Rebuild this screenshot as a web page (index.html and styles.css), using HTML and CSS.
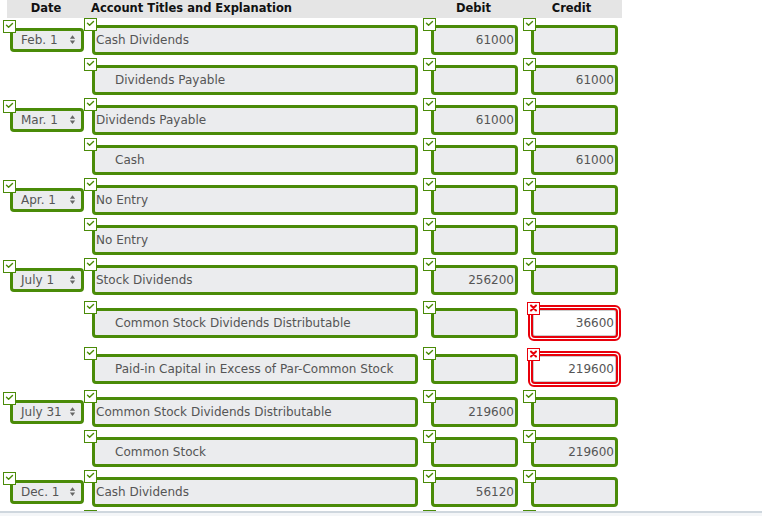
FILE: index.html
```html
<!DOCTYPE html>
<html>
<head>
<meta charset="utf-8">
<link rel="stylesheet" href="styles.css">
</head>
<body>
<div class="header">
  <div class="h-date">Date</div>
  <div class="h-acct">Account Titles and Explanation</div>
  <div class="h-num">Debit</div>
  <div class="h-num h-credit">Credit</div>
</div>

<div class="rows">
  <!-- Feb 1 -->
  <div class="row">
    <div class="c-date"><div class="cell"><span class="chk ok"><svg viewBox="0 0 11 11"><path d="M2.5 4.2 L4.6 6.2 L8.5 2.4"/></svg></span><div class="sel">Feb. 1<svg class="arr" viewBox="0 0 8 12"><path d="M4 1 L7 5 L1 5Z M4 11 L7 7 L1 7Z"/></svg></div></div></div>
    <div class="c-acct"><div class="cell"><span class="chk ok"><svg viewBox="0 0 11 11"><path d="M2.5 4.2 L4.6 6.2 L8.5 2.4"/></svg></span><div class="field">Cash Dividends</div></div></div>
    <div class="c-num"><div class="cell"><span class="chk ok"><svg viewBox="0 0 11 11"><path d="M2.5 4.2 L4.6 6.2 L8.5 2.4"/></svg></span><div class="field num">61000</div></div></div>
    <div class="c-num"><div class="cell"><span class="chk ok"><svg viewBox="0 0 11 11"><path d="M2.5 4.2 L4.6 6.2 L8.5 2.4"/></svg></span><div class="field num"></div></div></div>
  </div>
  <div class="row">
    <div class="c-date"></div>
    <div class="c-acct"><div class="cell"><span class="chk ok"><svg viewBox="0 0 11 11"><path d="M2.5 4.2 L4.6 6.2 L8.5 2.4"/></svg></span><div class="field ind">Dividends Payable</div></div></div>
    <div class="c-num"><div class="cell"><span class="chk ok"><svg viewBox="0 0 11 11"><path d="M2.5 4.2 L4.6 6.2 L8.5 2.4"/></svg></span><div class="field num"></div></div></div>
    <div class="c-num"><div class="cell"><span class="chk ok"><svg viewBox="0 0 11 11"><path d="M2.5 4.2 L4.6 6.2 L8.5 2.4"/></svg></span><div class="field num">61000</div></div></div>
  </div>

  <!-- Mar 1 -->
  <div class="row">
    <div class="c-date"><div class="cell"><span class="chk ok"><svg viewBox="0 0 11 11"><path d="M2.5 4.2 L4.6 6.2 L8.5 2.4"/></svg></span><div class="sel">Mar. 1<svg class="arr" viewBox="0 0 8 12"><path d="M4 1 L7 5 L1 5Z M4 11 L7 7 L1 7Z"/></svg></div></div></div>
    <div class="c-acct"><div class="cell"><span class="chk ok"><svg viewBox="0 0 11 11"><path d="M2.5 4.2 L4.6 6.2 L8.5 2.4"/></svg></span><div class="field">Dividends Payable</div></div></div>
    <div class="c-num"><div class="cell"><span class="chk ok"><svg viewBox="0 0 11 11"><path d="M2.5 4.2 L4.6 6.2 L8.5 2.4"/></svg></span><div class="field num">61000</div></div></div>
    <div class="c-num"><div class="cell"><span class="chk ok"><svg viewBox="0 0 11 11"><path d="M2.5 4.2 L4.6 6.2 L8.5 2.4"/></svg></span><div class="field num"></div></div></div>
  </div>
  <div class="row">
    <div class="c-date"></div>
    <div class="c-acct"><div class="cell"><span class="chk ok"><svg viewBox="0 0 11 11"><path d="M2.5 4.2 L4.6 6.2 L8.5 2.4"/></svg></span><div class="field ind">Cash</div></div></div>
    <div class="c-num"><div class="cell"><span class="chk ok"><svg viewBox="0 0 11 11"><path d="M2.5 4.2 L4.6 6.2 L8.5 2.4"/></svg></span><div class="field num"></div></div></div>
    <div class="c-num"><div class="cell"><span class="chk ok"><svg viewBox="0 0 11 11"><path d="M2.5 4.2 L4.6 6.2 L8.5 2.4"/></svg></span><div class="field num">61000</div></div></div>
  </div>

  <!-- Apr 1 -->
  <div class="row">
    <div class="c-date"><div class="cell"><span class="chk ok"><svg viewBox="0 0 11 11"><path d="M2.5 4.2 L4.6 6.2 L8.5 2.4"/></svg></span><div class="sel">Apr. 1<svg class="arr" viewBox="0 0 8 12"><path d="M4 1 L7 5 L1 5Z M4 11 L7 7 L1 7Z"/></svg></div></div></div>
    <div class="c-acct"><div class="cell"><span class="chk ok"><svg viewBox="0 0 11 11"><path d="M2.5 4.2 L4.6 6.2 L8.5 2.4"/></svg></span><div class="field">No Entry</div></div></div>
    <div class="c-num"><div class="cell"><span class="chk ok"><svg viewBox="0 0 11 11"><path d="M2.5 4.2 L4.6 6.2 L8.5 2.4"/></svg></span><div class="field num"></div></div></div>
    <div class="c-num"><div class="cell"><span class="chk ok"><svg viewBox="0 0 11 11"><path d="M2.5 4.2 L4.6 6.2 L8.5 2.4"/></svg></span><div class="field num"></div></div></div>
  </div>
  <div class="row">
    <div class="c-date"></div>
    <div class="c-acct"><div class="cell"><span class="chk ok"><svg viewBox="0 0 11 11"><path d="M2.5 4.2 L4.6 6.2 L8.5 2.4"/></svg></span><div class="field">No Entry</div></div></div>
    <div class="c-num"><div class="cell"><span class="chk ok"><svg viewBox="0 0 11 11"><path d="M2.5 4.2 L4.6 6.2 L8.5 2.4"/></svg></span><div class="field num"></div></div></div>
    <div class="c-num"><div class="cell"><span class="chk ok"><svg viewBox="0 0 11 11"><path d="M2.5 4.2 L4.6 6.2 L8.5 2.4"/></svg></span><div class="field num"></div></div></div>
  </div>

  <!-- July 1 -->
  <div class="row">
    <div class="c-date"><div class="cell"><span class="chk ok"><svg viewBox="0 0 11 11"><path d="M2.5 4.2 L4.6 6.2 L8.5 2.4"/></svg></span><div class="sel">July 1<svg class="arr" viewBox="0 0 8 12"><path d="M4 1 L7 5 L1 5Z M4 11 L7 7 L1 7Z"/></svg></div></div></div>
    <div class="c-acct"><div class="cell"><span class="chk ok"><svg viewBox="0 0 11 11"><path d="M2.5 4.2 L4.6 6.2 L8.5 2.4"/></svg></span><div class="field">Stock Dividends</div></div></div>
    <div class="c-num"><div class="cell"><span class="chk ok"><svg viewBox="0 0 11 11"><path d="M2.5 4.2 L4.6 6.2 L8.5 2.4"/></svg></span><div class="field num">256200</div></div></div>
    <div class="c-num"><div class="cell"><span class="chk ok"><svg viewBox="0 0 11 11"><path d="M2.5 4.2 L4.6 6.2 L8.5 2.4"/></svg></span><div class="field num"></div></div></div>
  </div>
  <div class="row tall">
    <div class="c-date"></div>
    <div class="c-acct"><div class="cell"><span class="chk ok"><svg viewBox="0 0 11 11"><path d="M2.5 4.2 L4.6 6.2 L8.5 2.4"/></svg></span><div class="field ind">Common Stock Dividends Distributable</div></div></div>
    <div class="c-num"><div class="cell"><span class="chk ok"><svg viewBox="0 0 11 11"><path d="M2.5 4.2 L4.6 6.2 L8.5 2.4"/></svg></span><div class="field num"></div></div></div>
    <div class="c-num"><div class="cell bad"><span class="chk err"><svg viewBox="0 0 11 11"><path d="M3 2.5 L8 7.5 M8 2.5 L3 7.5"/></svg></span><div class="wrong"><div class="wrong-in">36600</div></div></div></div>
  </div>
  <div class="row tall">
    <div class="c-date"></div>
    <div class="c-acct"><div class="cell"><span class="chk ok"><svg viewBox="0 0 11 11"><path d="M2.5 4.2 L4.6 6.2 L8.5 2.4"/></svg></span><div class="field ind">Paid-in Capital in Excess of Par-Common Stock</div></div></div>
    <div class="c-num"><div class="cell"><span class="chk ok"><svg viewBox="0 0 11 11"><path d="M2.5 4.2 L4.6 6.2 L8.5 2.4"/></svg></span><div class="field num"></div></div></div>
    <div class="c-num"><div class="cell bad"><span class="chk err"><svg viewBox="0 0 11 11"><path d="M3 2.5 L8 7.5 M8 2.5 L3 7.5"/></svg></span><div class="wrong"><div class="wrong-in">219600</div></div></div></div>
  </div>

  <!-- July 31 -->
  <div class="row">
    <div class="c-date"><div class="cell"><span class="chk ok"><svg viewBox="0 0 11 11"><path d="M2.5 4.2 L4.6 6.2 L8.5 2.4"/></svg></span><div class="sel">July 31<svg class="arr" viewBox="0 0 8 12"><path d="M4 1 L7 5 L1 5Z M4 11 L7 7 L1 7Z"/></svg></div></div></div>
    <div class="c-acct"><div class="cell"><span class="chk ok"><svg viewBox="0 0 11 11"><path d="M2.5 4.2 L4.6 6.2 L8.5 2.4"/></svg></span><div class="field">Common Stock Dividends Distributable</div></div></div>
    <div class="c-num"><div class="cell"><span class="chk ok"><svg viewBox="0 0 11 11"><path d="M2.5 4.2 L4.6 6.2 L8.5 2.4"/></svg></span><div class="field num">219600</div></div></div>
    <div class="c-num"><div class="cell"><span class="chk ok"><svg viewBox="0 0 11 11"><path d="M2.5 4.2 L4.6 6.2 L8.5 2.4"/></svg></span><div class="field num"></div></div></div>
  </div>
  <div class="row">
    <div class="c-date"></div>
    <div class="c-acct"><div class="cell"><span class="chk ok"><svg viewBox="0 0 11 11"><path d="M2.5 4.2 L4.6 6.2 L8.5 2.4"/></svg></span><div class="field ind">Common Stock</div></div></div>
    <div class="c-num"><div class="cell"><span class="chk ok"><svg viewBox="0 0 11 11"><path d="M2.5 4.2 L4.6 6.2 L8.5 2.4"/></svg></span><div class="field num"></div></div></div>
    <div class="c-num"><div class="cell"><span class="chk ok"><svg viewBox="0 0 11 11"><path d="M2.5 4.2 L4.6 6.2 L8.5 2.4"/></svg></span><div class="field num">219600</div></div></div>
  </div>

  <!-- Dec 1 -->
  <div class="row">
    <div class="c-date"><div class="cell"><span class="chk ok"><svg viewBox="0 0 11 11"><path d="M2.5 4.2 L4.6 6.2 L8.5 2.4"/></svg></span><div class="sel">Dec. 1<svg class="arr" viewBox="0 0 8 12"><path d="M4 1 L7 5 L1 5Z M4 11 L7 7 L1 7Z"/></svg></div></div></div>
    <div class="c-acct"><div class="cell"><span class="chk ok"><svg viewBox="0 0 11 11"><path d="M2.5 4.2 L4.6 6.2 L8.5 2.4"/></svg></span><div class="field">Cash Dividends</div></div></div>
    <div class="c-num"><div class="cell"><span class="chk ok"><svg viewBox="0 0 11 11"><path d="M2.5 4.2 L4.6 6.2 L8.5 2.4"/></svg></span><div class="field num">56120</div></div></div>
    <div class="c-num"><div class="cell"><span class="chk ok"><svg viewBox="0 0 11 11"><path d="M2.5 4.2 L4.6 6.2 L8.5 2.4"/></svg></span><div class="field num"></div></div></div>
  </div>
  <div class="row">
    <div class="c-date"></div>
    <div class="c-acct"><div class="cell"><span class="chk ok"><svg viewBox="0 0 11 11"><path d="M2.5 4.2 L4.6 6.2 L8.5 2.4"/></svg></span><div class="field ind"></div></div></div>
    <div class="c-num"><div class="cell"><span class="chk ok"><svg viewBox="0 0 11 11"><path d="M2.5 4.2 L4.6 6.2 L8.5 2.4"/></svg></span><div class="field num"></div></div></div>
    <div class="c-num"><div class="cell"><span class="chk ok"><svg viewBox="0 0 11 11"><path d="M2.5 4.2 L4.6 6.2 L8.5 2.4"/></svg></span><div class="field num"></div></div></div>
  </div>
</div>

<div class="bottom-bar"></div>
</body>
</html>
```

FILE: styles.css
```css
html, body {
  margin: 0;
  padding: 0;
  background: #ffffff;
  overflow: hidden;
}
body {
  font-family: "DejaVu Sans", Verdana, sans-serif;
  font-size: 12px;
  color: #555555;
}

.header {
  display: flex;
  margin-left: 7px;
  width: 615px;
  height: 18px;
  background: #e5e5e5;
  font-weight: bold;
  font-size: 11.5px;
  line-height: 16px;
  color: #111111;
}
.h-date {
  width: 78px;
  text-align: center;
}
.h-acct {
  width: 339px;
  padding-left: 6px;
}
.h-num {
  width: 87px;
  text-align: center;
}
.h-credit {
  margin-left: 11px;
}

.rows {
  padding-top: 2px;
}
.row {
  display: flex;
  align-items: center;
  height: 40px;
  padding-left: 10px;
}
.row.tall {
  height: 46px;
}

.c-date {
  width: 74px;
  margin-right: 8px;
}
.c-acct {
  width: 326px;
  margin-right: 13px;
}
.c-num {
  width: 87px;
  margin-right: 13px;
}

.cell {
  position: relative;
}

.chk {
  position: absolute;
  left: -8px;
  top: -7px;
  width: 13px;
  height: 13px;
  box-sizing: border-box;
  background: #ffffff;
  z-index: 2;
}
.chk svg {
  display: block;
  width: 11px;
  height: 11px;
  fill: none;
  stroke-linecap: round;
  stroke-linejoin: round;
}
.chk.ok {
  border: 1px solid #4a8b08;
}
.chk.ok svg {
  stroke: #4a8b08;
  stroke-width: 1.4;
}
.chk.err {
  border: 1px solid #e8000b;
  left: -4px;
  top: -3px;
}
.chk.err svg {
  stroke: #e8000b;
  stroke-width: 2;
}

.c-date .chk {
  left: -7px;
  top: -8px;
}

.sel {
  position: relative;
  height: 24px;
  box-sizing: border-box;
  border: 3px solid #4a8b08;
  border-radius: 4px;
  background: #ebecee;
  padding-left: 8px;
  line-height: 18px;
  white-space: nowrap;
}
.arr {
  position: absolute;
  right: 5px;
  top: 3px;
  width: 7px;
  height: 11px;
  fill: #666666;
}

.field {
  height: 30px;
  box-sizing: border-box;
  border: 3px solid #4a8b08;
  border-radius: 4px;
  background: #ebecee;
  padding: 0 1px;
  line-height: 24px;
  white-space: nowrap;
  overflow: hidden;
}
.field.ind {
  padding-left: 20px;
}
.field.num {
  text-align: right;
}

.wrong {
  margin: 0 -3px;
  height: 36px;
  box-sizing: border-box;
  border: 2px solid #e8000b;
  border-radius: 6px;
  padding: 1px;
  background: #ffffff;
}
.wrong-in {
  height: 100%;
  box-sizing: border-box;
  border: 2px solid #e8000b;
  border-radius: 4px;
  box-shadow: inset 0 0 0 1px #cccccc;
  background: #ffffff;
  text-align: right;
  padding-right: 2px;
  line-height: 26px;
}

.bottom-bar {
  position: fixed;
  left: 0;
  right: 0;
  bottom: 0;
  height: 3px;
  border-top: 2px solid #cfd7de;
  background: #f4f6f8;
  z-index: 5;
}
```
